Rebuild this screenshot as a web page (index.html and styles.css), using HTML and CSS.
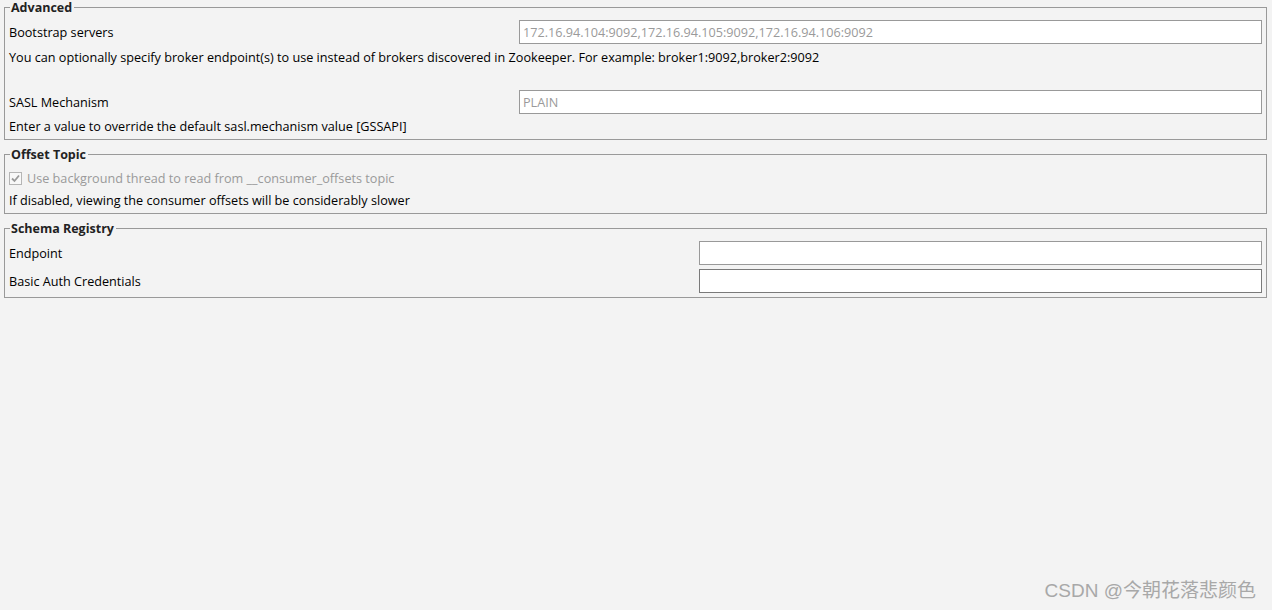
FILE: index.html
```html
<!DOCTYPE html>
<html>
<head>
<meta charset="utf-8">
<link rel="stylesheet" href="styles.css">
</head>
<body>
<div class="page">
  <fieldset class="group group-advanced">
    <legend>Advanced</legend>
    <div class="row row-adv">
      <span class="label">Bootstrap servers</span>
      <input class="field" type="text" disabled value="172.16.94.104:9092,172.16.94.105:9092,172.16.94.106:9092">
    </div>
    <div class="desc">You can optionally specify broker endpoint(s) to use instead of brokers discovered in Zookeeper. For example: broker1:9092,broker2:9092</div>
    <div class="row row-adv row-sasl">
      <span class="label">SASL Mechanism</span>
      <input class="field" type="text" disabled value="PLAIN">
    </div>
    <div class="desc desc-sasl">Enter a value to override the default sasl.mechanism value [GSSAPI]</div>
  </fieldset>

  <fieldset class="group group-offset">
    <legend>Offset Topic</legend>
    <label class="check">
      <span class="box"><svg width="11" height="11" viewBox="0 0 11 11"><path d="M2 5.5 L4.5 8 L9 2.5" fill="none" stroke="#9a9a9a" stroke-width="1.8"/></svg></span>
      <span>Use background thread to read from __consumer_offsets topic</span>
    </label>
    <div class="desc">If disabled, viewing the consumer offsets will be considerably slower</div>
  </fieldset>

  <fieldset class="group group-schema">
    <legend>Schema Registry</legend>
    <div class="row row-schema">
      <span class="label">Endpoint</span>
      <input class="field field-light" type="text">
    </div>
    <div class="row row-schema">
      <span class="label">Basic Auth Credentials</span>
      <input class="field field-dark" type="text">
    </div>
  </fieldset>
</div>
<div class="watermark">CSDN @今朝花落悲颜色</div>
</body>
</html>
```
FILE: styles.css
```css
html, body {
  margin: 0;
  padding: 0;
  background: #f3f3f3;
  width: 1272px;
  height: 610px;
  overflow: hidden;
}
body {
  font-family: "Open Sans", "Noto Sans", sans-serif;
  font-size: 12.65px;
  color: #000;
  position: relative;
}
.page {
  padding: 0 5px 0 4px;
  display: flex;
  flex-direction: column;
  gap: 7px;
}
.group {
  margin: 0;
  border: 1px solid #999;
  padding: 0 4px 0 4px;
  min-width: 0;
}
.group legend {
  font-weight: bold;
  font-size: 12.5px;
  padding: 0 2px 0 1px;
  margin-left: 1px;
  line-height: 15px;
  color: #222;
}
.row {
  display: grid;
  align-items: center;
  line-height: 18px;
}
.row-adv {
  grid-template-columns: 510px 1fr;
  margin-top: 5px;
}
.row-sasl {
  margin-top: 24px;
}
.row-schema {
  grid-template-columns: 690px 1fr;
  margin-top: 4px;
}
.row-schema:first-of-type {
  margin-top: 5px;
}
.label {
  white-space: nowrap;
}
.field {
  height: 24px;
  box-sizing: border-box;
  border: 1px solid #999;
  background: #fff;
  font-family: inherit;
  font-size: 12.65px;
  color: #9a9a9a;
  padding: 0 3px;
  margin: 0;
  width: 100%;
  outline: none;
}
.field:disabled {
  background: #fff;
  color: #9a9a9a;
}
.field-dark {
  border-color: #7a7a7a;
}
.desc {
  line-height: 18px;
  margin-top: 4px;
  white-space: nowrap;
}
.desc-sasl {
  margin-top: 3px;
}
.group-advanced {
  padding-bottom: 4px;
}
.group-offset {
  padding-bottom: 4px;
}
.group-schema {
  padding-bottom: 4px;
}
.check {
  display: flex;
  align-items: center;
  gap: 5px;
  color: #9a9a9a;
  line-height: 18px;
  margin-top: 7px;
}
.check .box {
  width: 11px;
  height: 11px;
  border: 1px solid #b5b5b5;
  background: #f8f8f8;
  display: flex;
}
.group-offset .desc {
  margin-top: 4px;
}
.watermark {
  position: absolute;
  right: 16px;
  bottom: 8px;
  font-family: "Liberation Sans", "Noto Sans CJK SC", sans-serif;
  font-size: 19px;
  color: #a8a8a8;
}
```
